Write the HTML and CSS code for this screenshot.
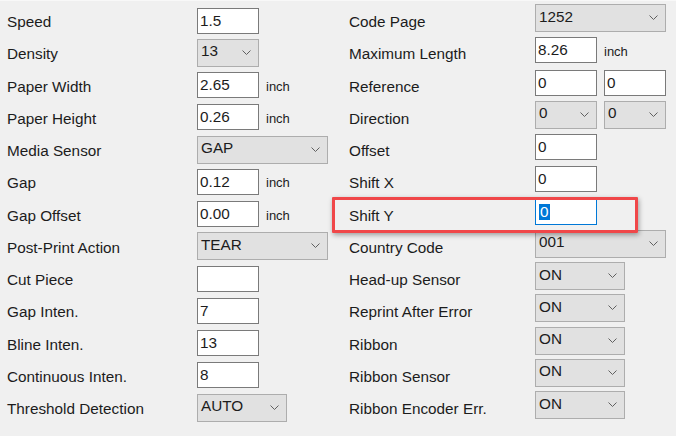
FILE: index.html
```html
<!DOCTYPE html>
<html lang="en">
<head>
<meta charset="utf-8">
<title>Printer Settings</title>
<link rel="stylesheet" href="styles.css">
</head>
<body>
<div class="page">
  <div class="panel left">
    <div class="lbl">Speed</div>
    <div class="ctl"><div class="field w62">1.5</div></div>

    <div class="lbl">Density</div>
    <div class="ctl"><div class="combo w62"><span>13</span><svg class="chev" width="9" height="5" viewBox="0 0 9 5"><path d="M0.5 0.5L4.5 4.5L8.5 0.5"/></svg></div></div>

    <div class="lbl">Paper Width</div>
    <div class="ctl"><div class="field w62">2.65</div><span class="unit">inch</span></div>

    <div class="lbl">Paper Height</div>
    <div class="ctl"><div class="field w62">0.26</div><span class="unit">inch</span></div>

    <div class="lbl">Media Sensor</div>
    <div class="ctl"><div class="combo w131"><span>GAP</span><svg class="chev" width="9" height="5" viewBox="0 0 9 5"><path d="M0.5 0.5L4.5 4.5L8.5 0.5"/></svg></div></div>

    <div class="lbl">Gap</div>
    <div class="ctl"><div class="field w62">0.12</div><span class="unit">inch</span></div>

    <div class="lbl">Gap Offset</div>
    <div class="ctl"><div class="field w62">0.00</div><span class="unit">inch</span></div>

    <div class="lbl">Post-Print Action</div>
    <div class="ctl"><div class="combo w131"><span>TEAR</span><svg class="chev" width="9" height="5" viewBox="0 0 9 5"><path d="M0.5 0.5L4.5 4.5L8.5 0.5"/></svg></div></div>

    <div class="lbl">Cut Piece</div>
    <div class="ctl"><div class="field w62"></div></div>

    <div class="lbl">Gap Inten.</div>
    <div class="ctl"><div class="field w62">7</div></div>

    <div class="lbl">Bline Inten.</div>
    <div class="ctl"><div class="field w62">13</div></div>

    <div class="lbl">Continuous Inten.</div>
    <div class="ctl"><div class="field w62">8</div></div>

    <div class="lbl">Threshold Detection</div>
    <div class="ctl"><div class="combo w90"><span>AUTO</span><svg class="chev" width="9" height="5" viewBox="0 0 9 5"><path d="M0.5 0.5L4.5 4.5L8.5 0.5"/></svg></div></div>
  </div>

  <div class="panel right">
    <div class="lbl">Code Page</div>
    <div class="ctl"><div class="combo w131"><span>1252</span><svg class="chev" width="9" height="5" viewBox="0 0 9 5"><path d="M0.5 0.5L4.5 4.5L8.5 0.5"/></svg></div></div>

    <div class="lbl">Maximum Length</div>
    <div class="ctl"><div class="field w62">8.26</div><span class="unit">inch</span></div>

    <div class="lbl">Reference</div>
    <div class="ctl"><div class="field w62">0</div><div class="field w62">0</div></div>

    <div class="lbl">Direction</div>
    <div class="ctl"><div class="combo w62"><span>0</span><svg class="chev" width="9" height="5" viewBox="0 0 9 5"><path d="M0.5 0.5L4.5 4.5L8.5 0.5"/></svg></div><div class="combo w62"><span>0</span><svg class="chev" width="9" height="5" viewBox="0 0 9 5"><path d="M0.5 0.5L4.5 4.5L8.5 0.5"/></svg></div></div>

    <div class="lbl">Offset</div>
    <div class="ctl"><div class="field w62">0</div></div>

    <div class="lbl">Shift X</div>
    <div class="ctl"><div class="field w62">0</div></div>

    <div class="lbl">Shift Y</div>
    <div class="ctl"><div class="field w62 focused"><span class="sel">0</span></div></div>

    <div class="lbl">Country Code</div>
    <div class="ctl"><div class="combo w131"><span>001</span><svg class="chev" width="9" height="5" viewBox="0 0 9 5"><path d="M0.5 0.5L4.5 4.5L8.5 0.5"/></svg></div></div>

    <div class="lbl">Head-up Sensor</div>
    <div class="ctl"><div class="combo w90"><span>ON</span><svg class="chev" width="9" height="5" viewBox="0 0 9 5"><path d="M0.5 0.5L4.5 4.5L8.5 0.5"/></svg></div></div>

    <div class="lbl">Reprint After Error</div>
    <div class="ctl"><div class="combo w90"><span>ON</span><svg class="chev" width="9" height="5" viewBox="0 0 9 5"><path d="M0.5 0.5L4.5 4.5L8.5 0.5"/></svg></div></div>

    <div class="lbl">Ribbon</div>
    <div class="ctl"><div class="combo w90"><span>ON</span><svg class="chev" width="9" height="5" viewBox="0 0 9 5"><path d="M0.5 0.5L4.5 4.5L8.5 0.5"/></svg></div></div>

    <div class="lbl">Ribbon Sensor</div>
    <div class="ctl"><div class="combo w90"><span>ON</span><svg class="chev" width="9" height="5" viewBox="0 0 9 5"><path d="M0.5 0.5L4.5 4.5L8.5 0.5"/></svg></div></div>

    <div class="lbl">Ribbon Encoder Err.</div>
    <div class="ctl"><div class="combo w90"><span>ON</span><svg class="chev" width="9" height="5" viewBox="0 0 9 5"><path d="M0.5 0.5L4.5 4.5L8.5 0.5"/></svg></div></div>
  </div>

  <div class="callout"></div>
</div>
</body>
</html>
```

FILE: styles.css
```css
html, body {
  margin: 0;
  background: #f0f0f0;
}

body {
  font-family: "Liberation Sans", Arial, sans-serif;
  font-size: 15.3px;
  color: #1c1c1c;
}

.page {
  position: relative;
  display: flex;
  align-items: flex-start;
  height: 435px;
  box-sizing: border-box;
  border-top: 1px solid #f8f8f8;
  padding: 5px 0 0 7px;
}

.panel {
  display: grid;
  grid-auto-rows: 32.25px;
  align-items: center;
}

.panel.left {
  grid-template-columns: 190px 152px;
}

.panel.right {
  grid-template-columns: 186px 140px;
}

.lbl {
  white-space: nowrap;
}

.ctl {
  display: flex;
  align-items: center;
  gap: 7px;
}

.left .ctl {
  margin-top: -3px;
}

.right .ctl {
  margin-top: -8px;
}

.field {
  box-sizing: border-box;
  height: 26px;
  background: #ffffff;
  border: 1px solid #7a7a7a;
  padding-left: 2px;
  display: flex;
  align-items: center;
  flex: none;
}

.field.focused {
  border-color: #0078d7;
}

.sel {
  background: #0078d7;
  color: #ffffff;
  line-height: 16px;
  padding: 0 1px;
  margin-left: 1px;
}

.combo {
  box-sizing: border-box;
  height: 28px;
  background: #e1e1e1;
  border: 1px solid #adadad;
  padding: 0 7px 3px 3px;
  display: flex;
  align-items: center;
  justify-content: space-between;
  flex: none;
}

.chev {
  display: block;
  margin-top: 2px;
}

.chev path {
  fill: none;
  stroke: #606060;
  stroke-width: 1;
}

.w62 { width: 62px; }
.w90 { width: 90px; }
.w131 { width: 131px; }

.unit {
  font-size: 13px;
  margin-top: 2px;
}

.callout {
  position: absolute;
  left: 332px;
  top: 196px;
  width: 306px;
  height: 36px;
  box-sizing: border-box;
  border: 3px solid #f04749;
  border-radius: 1px;
  box-shadow: 1px 2px 5px rgba(0, 0, 0, 0.35);
}
```
